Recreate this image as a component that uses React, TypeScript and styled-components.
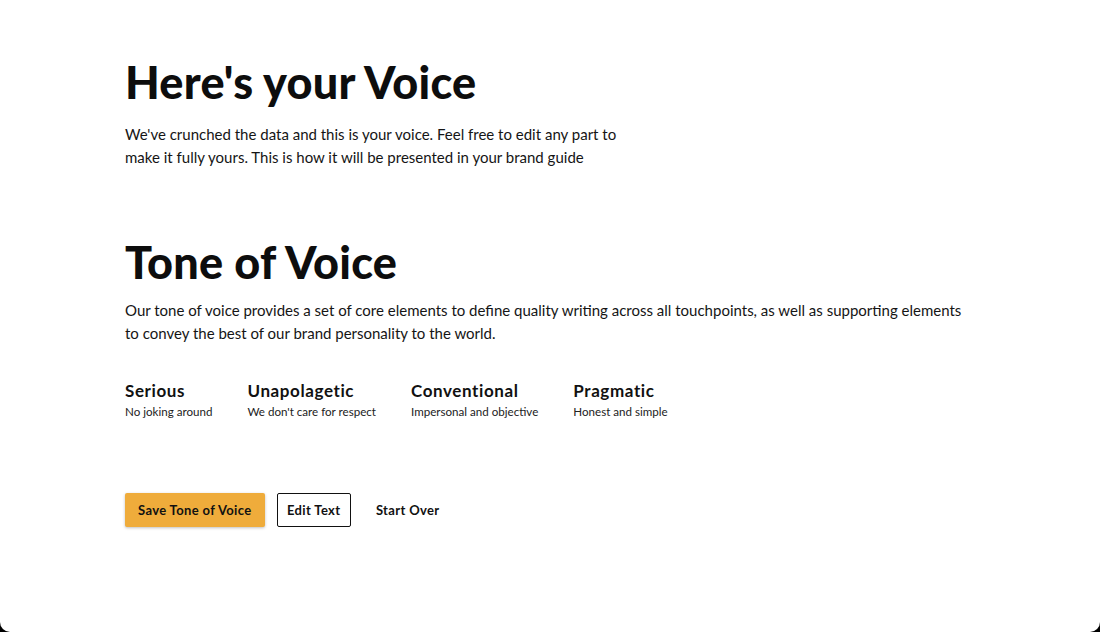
import React from 'react';
import styled, { createGlobalStyle } from 'styled-components';

const GlobalStyle = createGlobalStyle`
  html, body {
    margin: 0;
    padding: 0;
    background: #000;
  }
  body {
    font-family: 'Lato', 'Liberation Sans', sans-serif;
    color: #111;
  }
`;

const Frame = styled.div`
  width: 1100px;
  height: 632px;
  background: #fff;
  border-radius: 0 0 10px 10px;
  overflow: hidden;
`;

const Content = styled.main`
  padding: 56px 0 0 125px;
  display: flex;
  flex-direction: column;
`;

const Section = styled.section<{ $gap?: number }>`
  margin-bottom: ${p => p.$gap ?? 0}px;
`;

const Heading = styled.h1<{ $space: number }>`
  margin: 0 0 ${p => p.$space}px;
  font-size: 45px;
  font-weight: 900;
  line-height: 52px;
  letter-spacing: 0.25px;
  color: #0d0d0d;
`;

const Lead = styled.p<{ $width: number }>`
  margin: 0;
  max-width: ${p => p.$width}px;
  font-size: 15px;
  line-height: 23px;
  font-weight: 400;
  color: #151515;
`;

const Traits = styled.div`
  display: flex;
  gap: 35px;
  margin-top: 35px;
`;

const Trait = styled.div`
  display: flex;
  flex-direction: column;
`;

const TraitName = styled.span`
  font-size: 17px;
  font-weight: 700;
  line-height: 22px;
  letter-spacing: 0.6px;
`;

const TraitNote = styled.span`
  font-size: 11.6px;
  line-height: 20px;
  color: #222;
`;

const Actions = styled.div`
  display: flex;
  align-items: center;
  gap: 12px;
  margin-top: 71px;
`;

const Button = styled.button<{ $variant: 'primary' | 'outline' | 'plain' }>`
  height: 34px;
  padding: 0 ${p => (p.$variant === 'outline' ? 9.5 : 12)}px;
  font-family: inherit;
  font-size: 13px;
  font-weight: 700;
  letter-spacing: 0.35px;
  color: #111;
  cursor: pointer;
  border-radius: 2px;
  background: ${p => (p.$variant === 'primary' ? '#efac3b' : '#fff')};
  border: 1px solid ${p => (p.$variant === 'outline' ? '#111' : 'transparent')};
  box-shadow: ${p => (p.$variant === 'primary' ? '0 1px 3px rgba(0,0,0,0.25)' : 'none')};
`;

const traits = [
  { name: 'Serious', note: 'No joking around' },
  { name: 'Unapolagetic', note: "We don't care for respect" },
  { name: 'Conventional', note: 'Impersonal and objective' },
  { name: 'Pragmatic', note: 'Honest and simple' },
];

export default function App() {
  return (
    <>
      <GlobalStyle />
      <Frame>
        <Content>
          <Section $gap={67}>
            <Heading $space={15}>Here's your Voice</Heading>
            <Lead $width={520}>
              We've crunched the data and this is your voice. Feel free to edit any part to make it fully yours. This
              is how it will be presented in your brand guide
            </Lead>
          </Section>
          <Section>
            <Heading $space={11}>Tone of Voice</Heading>
            <Lead $width={845}>
              Our tone of voice provides a set of core elements to define quality writing across all touchpoints, as
              well as supporting elements to convey the best of our brand personality to the world.
            </Lead>
            <Traits>
              {traits.map(t => (
                <Trait key={t.name}>
                  <TraitName>{t.name}</TraitName>
                  <TraitNote>{t.note}</TraitNote>
                </Trait>
              ))}
            </Traits>
          </Section>
          <Actions>
            <Button $variant="primary">Save Tone of Voice</Button>
            <Button $variant="outline">Edit Text</Button>
            <Button $variant="plain">Start Over</Button>
          </Actions>
        </Content>
      </Frame>
    </>
  );
}
